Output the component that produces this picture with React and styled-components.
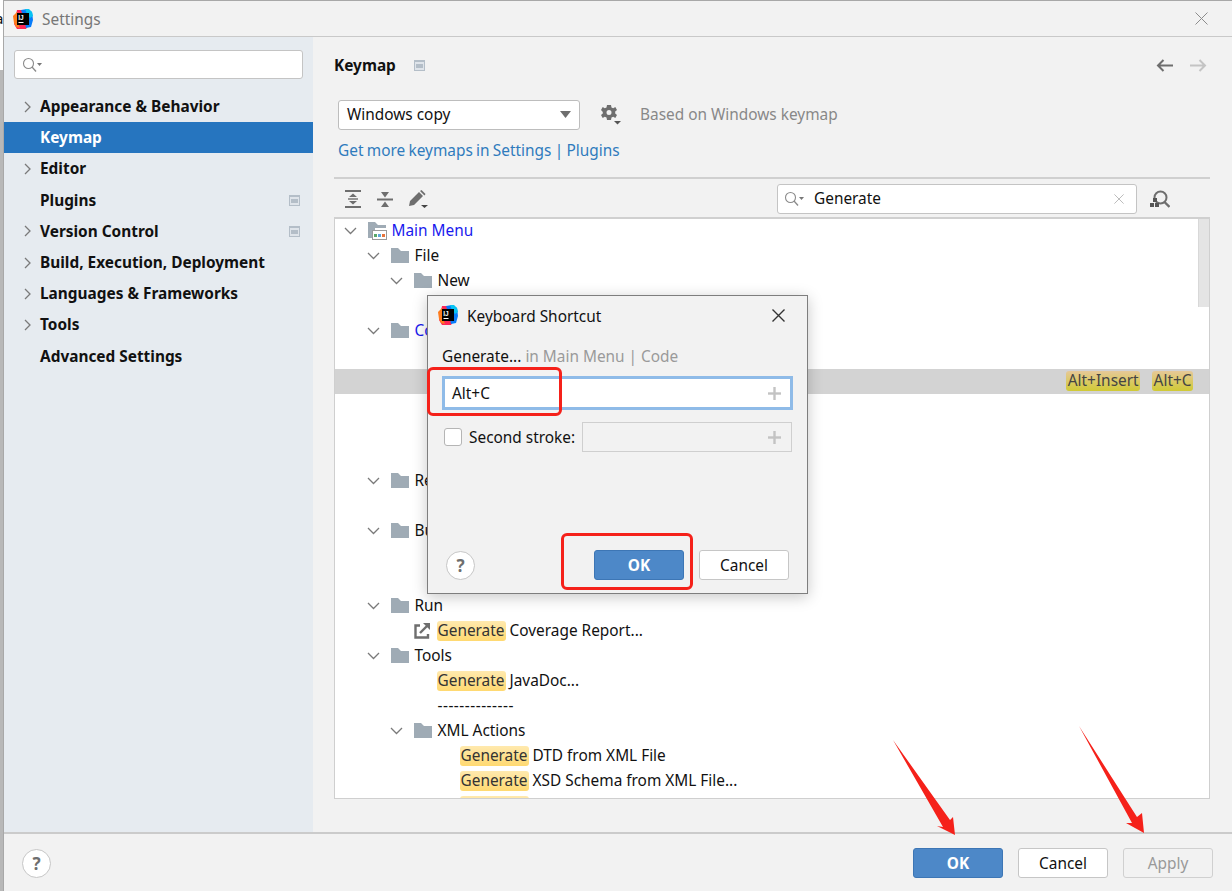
import React from 'react'
import styled, { createGlobalStyle } from 'styled-components'

const GlobalStyle = createGlobalStyle`
  html, body { margin: 0; padding: 0; background: #fff; }
  body { font-family: "Noto Sans", "Open Sans", sans-serif; font-size: 15.4px; color: #111; }
  * { box-sizing: border-box; }
`

const Page = styled.div`
  position: relative;
  width: 1232px;
  height: 891px;
  overflow: hidden;
  padding-left: 3px;
  background: linear-gradient(#fff 70px, #b8b8b8 70px);
`
const EdgeLetter = styled.span`
  position: absolute;
  left: -5px;
  top: 8px;
  font-size: 15px;
`
const Window = styled.div`
  display: flex;
  flex-direction: column;
  height: 891px;
  border-top: 1px solid #a8a8a8;
  border-left: 1px solid #a8a8a8;
  background: #f2f2f2;
`
const TitleBar = styled.div`
  display: flex;
  align-items: center;
  height: 36px;
  flex: none;
  padding: 0 24px 0 9px;
  gap: 9px;
  border-bottom: 1px solid #c9c9c9;
`
const TitleText = styled.span`
  flex: 1;
  margin-top: 2px;
  color: #777;
`
const Body = styled.div`
  display: flex;
  flex: 1;
  min-height: 0;
`
const Sidebar = styled.nav`
  width: 309px;
  flex: none;
  background: #e6ebf0;
  padding-top: 13px;
`
const SideSearch = styled.div`
  display: flex;
  align-items: center;
  height: 29px;
  margin: 0 10px 12px;
  padding-left: 7px;
  background: #fff;
  border: 1px solid #c4c4c4;
  border-radius: 3px;
`
const SideItem = styled.div`
  display: flex;
  align-items: center;
  height: 31.2px;
  padding: 0 13px 0 19px;
  font-weight: 700;
  background: ${p => (p.$active ? '#2675bf' : 'transparent')};
  color: ${p => (p.$active ? '#fff' : '#111')};
`
const SideLabel = styled.span`
  flex: 1;
  margin-left: 5px;
`
const Chevron = styled.span`
  display: inline-flex;
  width: 12px;
  flex: none;
`
const Main = styled.main`
  flex: 1;
  min-width: 0;
  display: flex;
  flex-direction: column;
  padding: 0 22px 0 21px;
`
const Header = styled.div`
  display: flex;
  align-items: center;
  height: 56px;
  flex: none;
  gap: 18px;
`
const HeaderTitle = styled.span`
  font-weight: 700;
`
const NavArrows = styled.div`
  margin-left: auto;
  display: flex;
  gap: 17px;
  margin-right: 3px;
`
const KeymapRow = styled.div`
  display: flex;
  align-items: center;
  height: 30px;
  margin-top: 7px;
  margin-left: 4px;
  flex: none;
`
const Select = styled.div`
  display: flex;
  align-items: center;
  justify-content: space-between;
  width: 242px;
  height: 30px;
  padding: 0 8px 2px 8px;
  background: #fff;
  border: 1px solid #bdbdbd;
  border-radius: 3px;
`
const BasedOn = styled.span`
  margin-left: 19px;
  padding-bottom: 1px;
  color: #888;
`
const GearBox = styled.span`
  display: inline-flex;
  margin-left: 21px;
`
const MoreLink = styled.div`
  margin: 10px 0 0 4px;
  height: 21px;
  line-height: 21px;
  flex: none;
  word-spacing: -0.7px;
  color: #2f7bbd;
`
const Toolbar = styled.div`
  display: flex;
  align-items: center;
  flex: none;
  height: 40px;
  margin-top: 16px;
  padding: 2px 40px 0 11px;
  gap: 16px;
  border-top: 2px solid #d0d0d0;
`
const ToolSearch = styled.div`
  display: flex;
  align-items: center;
  width: 360px;
  height: 30px;
  margin-left: auto;
  margin-right: -3px;
  padding: 0 12px 0 6px;
  background: #fff;
  border: 1px solid #c4c4c4;
  border-radius: 3px;
`
const ToolSearchText = styled.span`
  flex: 1;
  margin-left: 10px;
  padding-bottom: 1px;
`
const Tree = styled.div`
  position: relative;
  height: 582px;
  flex: none;
  overflow: hidden;
  background: #fff;
  border: 1px solid #cfcfcf;
  border-top: 2px solid #d0d0d0;
`
const Row = styled.div`
  display: flex;
  align-items: center;
  height: 25px;
  padding-left: ${p => p.$level * 23 + 9}px;
  padding-right: 16px;
  padding-bottom: 2px;
  background: ${p => (p.$selected ? '#d3d3d3' : 'transparent')};
  white-space: pre;
`
const TwistSlot = styled.span`
  display: inline-flex;
  width: 24px;
  flex: none;
`
const IconSlot = styled.span`
  display: inline-flex;
  justify-content: flex-start;
  width: 23.5px;
  flex: none;
`
const RowLabel = styled.span`
  color: ${p => (p.$link ? '#1a1aee' : '#111')};
  letter-spacing: ${p => (p.$dashes ? '0.5px' : 'normal')};
`
const Highlight = styled.span`
  display: inline-block;
  height: 20px;
  line-height: 19px;
  margin-left: -1px;
  padding: 0 1px;
  border-radius: 3px;
  background: linear-gradient(#ffe9ae, #ffd971);
  color: #333;
`
const Shortcuts = styled.div`
  margin-left: auto;
  display: flex;
  gap: 12px;
`
const KeyChip = styled.span`
  height: 20px;
  line-height: 19px;
  padding: 0 1.5px;
  border-radius: 3px;
  background: linear-gradient(#e6c898, #d0ca35);
  color: #444;
`
const ScrollThumb = styled.div`
  position: absolute;
  right: 0;
  top: 0;
  width: 11px;
  height: 88px;
  background: #e4e4e4;
  border-left: 1px solid #d8d8d8;
`
const Footer = styled.div`
  display: flex;
  align-items: center;
  flex: none;
  height: 59px;
  padding: 1px 19px 0 18px;
  gap: 15px;
  border-top: 2px solid #cbcbcb;
`
const HelpButton = styled.span`
  display: inline-flex;
  align-items: center;
  justify-content: center;
  width: 29px;
  height: 29px;
  flex: none;
  border-radius: 50%;
  background: #fff;
  border: 1px solid #c6c6c6;
  font-weight: 700;
  font-size: 17px;
  color: #6e6e6e;
`
const Spacer = styled.div`
  flex: 1;
`
const Button = styled.button`
  width: 90px;
  height: 30px;
  padding: 0;
  border-radius: 3px;
  font: inherit;
  font-weight: ${p => (p.$primary ? 700 : 400)};
  border: 1px solid ${p => (p.$primary ? '#3d76b5' : p.$disabled ? '#d0d0d0' : '#c6c6c6')};
  background: ${p => (p.$primary ? '#4d88c8' : p.$disabled ? '#f2f2f2' : '#fff')};
  color: ${p => (p.$primary ? '#fff' : p.$disabled ? '#999' : '#111')};
`
const Dialog = styled.div`
  position: absolute;
  left: 427px;
  top: 295px;
  width: 381px;
  height: 299px;
  display: flex;
  flex-direction: column;
  background: #f2f2f2;
  border: 1px solid #7e7e7e;
  box-shadow: 0 3px 14px rgba(0, 0, 0, 0.22);
  padding: 0 15px 0 14px;
`
const DialogTitle = styled.div`
  display: flex;
  align-items: center;
  height: 38px;
  margin-left: -4px;
  margin-right: 7px;
  gap: 9px;
  flex: none;
`
const DialogName = styled.span`
  flex: 1;
  margin-top: 2px;
`
const ActionPath = styled.div`
  margin-top: 12px;
  height: 21px;
  line-height: 21px;
  flex: none;
`
const Muted = styled.span`
  color: #9a9a9a;
`
const FocusField = styled.div`
  display: flex;
  align-items: center;
  justify-content: space-between;
  height: 34px;
  margin: 9px -1px 0 0;
  padding: 0 9px 0 7px;
  background: #fff;
  border: 3px solid #8fbbe8;
`
const StrokeRow = styled.div`
  display: flex;
  align-items: center;
  height: 30px;
  margin-top: 12px;
  flex: none;
`
const Checkbox = styled.span`
  width: 18px;
  height: 18px;
  margin: 0 7px 0 2px;
  flex: none;
  background: #fff;
  border: 1px solid #b5b5b5;
  border-radius: 3px;
`
const DisabledField = styled.div`
  display: flex;
  align-items: center;
  justify-content: flex-end;
  flex: 1;
  height: 30px;
  margin-left: 7px;
  padding-right: 10px;
  border: 1px solid #cfcfcf;
  background: #f2f2f2;
`
const DialogActions = styled.div`
  display: flex;
  align-items: center;
  margin-top: auto;
  margin-bottom: 13px;
  padding: 0 3px 0 4px;
  gap: 15px;
`
const Mark = styled.div`
  position: absolute;
  left: ${p => p.$x}px;
  top: ${p => p.$y}px;
  width: ${p => p.$w}px;
  height: ${p => p.$h}px;
  border: 3.500px solid #f5211a;
  border-radius: 6px;
  pointer-events: none;
`
const ArrowSvg = styled.svg`
  position: absolute;
  left: 880px;
  top: 720px;
  pointer-events: none;
`

const ChevronRight = () => (
  <svg width="9" height="12" viewBox="0 0 9 12" fill="none" stroke="#7a7a7a" strokeWidth="1.3"><path d="M2 1l5 5-5 5" /></svg>
)
const ChevronDown = () => (
  <svg width="13" height="8" viewBox="0 0 13 8" fill="none" stroke="#7a7a7a" strokeWidth="1.3"><path d="M1 1l5.500 5.500L12 1" /></svg>
)
const Folder = () => (
  <svg width="18" height="15" viewBox="0 0 18 15"><path d="M0 0h7l3 3h8v12H0z" fill="#9fabb5" /></svg>
)
const MenuFolder = () => (
  <svg width="19" height="18" viewBox="0 0 19 18">
    <path d="M0 0h7l3 3h8v3H7v10H0z" fill="#9fabb5" />
    <rect x="4.500" y="8.500" width="14" height="9" fill="#fff" stroke="#9a9a9a" />
    <rect x="6" y="12" width="3" height="3" fill="#59a869" />
    <rect x="10" y="12" width="3" height="3" fill="#5fa7d9" />
    <rect x="14" y="12" width="3" height="3" fill="#e8743b" />
  </svg>
)
const SearchIcon = () => (
  <svg width="20" height="16" viewBox="0 0 20 16" fill="none">
    <circle cx="6.500" cy="6.500" r="5" stroke="#8a8a8a" strokeWidth="1.100" />
    <path d="M10 10l4 4.500" stroke="#8a8a8a" strokeWidth="1.300" />
    <path d="M15 6h5l-2.500 3z" fill="#777" />
  </svg>
)
const PinIcon = () => (
  <svg width="11" height="11" viewBox="0 0 11 11">
    <rect width="11" height="11" fill="#b4bec8" />
    <rect x="1" y="2" width="9" height="8" fill="#dfe4ea" />
    <rect x="2" y="4" width="7" height="4" fill="#b4bec8" />
  </svg>
)
const IdeaLogo = () => (
  <svg width="20" height="20" viewBox="0 0 20 20">
    <path d="M4 1h10l2 14-3 5H4L1 15z" fill="#fe2857" />
    <path d="M0 7l4-4 3 3-2 8 2 5-4-1-2-4z" fill="#fe7c1e" />
    <path d="M8 1l6-1 5 3 1 8-2 7-5 1-2-9z" fill="#087cfa" />
    <path d="M12 0h4l3 3 1 4-3 2-3-4z" fill="#07c3f2" />
    <rect x="4" y="4" width="12" height="12" fill="#000" />
    <rect x="5.500" y="13" width="5" height="1" fill="#fff" />
    <text x="5.300" y="11" fontFamily="Liberation Sans, sans-serif" fontWeight="700" fontSize="6.500" fill="#fff">IJ</text>
  </svg>
)
const CloseIcon = ({ color = '#8c8c8c', w = 1, size = 13 }) => (
  <svg width={size} height={size} viewBox="0 0 13 13" fill="none" stroke={color} strokeWidth={w}><path d="M.5.5l12 12M12.500.5l-12 12" /></svg>
)
const ArrowIcon = ({ dir, color }) => (
  <svg width="17" height="13" viewBox="0 0 17 13" fill="none" stroke={color} strokeWidth="2">
    {dir === 'left' ? <path d="M17 6.500H2M7.500 1L2 6.500 7.500 12" /> : <path d="M0 6.500h15M9.500 1L15 6.500 9.500 12" />}
  </svg>
)
const Gear = () => (
  <svg width="20" height="20" viewBox="0 0 20 20">
    <path fillRule="evenodd" fill="#6e6e6e" d="M6 0h4l.5 2.400 1.700.8 2.100-1.300 1.700 3-1.800 1.600v1.900l1.800 1.600-1.700 3-2.100-1.300-1.700.8L10 15H6l-.5-2.500-1.700-.8-2.100 1.300-1.700-3 1.800-1.600V7L0 5l1.700-3 2.100 1.200 1.700-.8zM8 5a2.500 2.500 0 100 5 2.500 2.500 0 000-5z" />
    <path d="M13 16h7l-3.500 3.500z" fill="#555" />
  </svg>
)
const ExpandIcon = () => (
  <svg width="16" height="18" viewBox="0 0 16 18" fill="#6e6e6e">
    <rect width="16" height="2" /><rect y="16" width="16" height="2" />
    <path d="M8 3.500l4 3.500H4zM8 14.500L4 11h8z" /><rect x="3" y="8.300" width="10" height="1.400" />
  </svg>
)
const CollapseIcon = () => (
  <svg width="16" height="17" viewBox="0 0 16 17" fill="#6e6e6e">
    <rect y="7.500" width="16" height="2" />
    <path d="M8 6.500L4 1h8zM8 10.500l4 5.500H4z" />
  </svg>
)
const PencilIcon = () => (
  <svg width="19" height="18" viewBox="0 0 19 18" fill="#6e6e6e">
    <path d="M0 16l1-5L10 2l4 4-9 9zM11 1l1.500-1 4 4-1 1.500z" />
    <path d="M12 15h7l-3.500 3z" fill="#444" />
  </svg>
)
const FindIcon = () => (
  <svg width="20" height="18" viewBox="0 0 20 18" fill="none">
    <circle cx="10.500" cy="7.500" r="6" stroke="#6e6e6e" strokeWidth="2" />
    <path d="M14.500 12l5 5" stroke="#6e6e6e" strokeWidth="2.400" />
    <rect x="0" y="13" width="4" height="4" fill="#555" /><rect x="5" y="13" width="4" height="4" fill="#555" /><rect x="3" y="8" width="4" height="4" fill="#555" />
  </svg>
)
const ExportIcon = () => (
  <svg width="16" height="16" viewBox="0 0 16 16" fill="none" stroke="#6e6e6e" strokeWidth="2.400">
    <path d="M6 2.500H1.500v12H14V11" /><path d="M6 10l8-8" /><path fill="#6e6e6e" stroke="none" d="M9 0h7v7z" />
  </svg>
)
const Plus = () => (
  <svg width="13" height="13" viewBox="0 0 13 13" fill="#c3c3c3"><rect x="5.300" width="2.400" height="13" /><rect y="5.300" width="13" height="2.400" /></svg>
)
const Caret = () => (
  <svg width="11" height="7" viewBox="0 0 11 7"><path d="M0 0h11L5.500 7z" fill="#6e6e6e" /></svg>
)

const sideItems = [
  { label: 'Appearance & Behavior', arrow: true },
  { label: 'Keymap', active: true },
  { label: 'Editor', arrow: true },
  { label: 'Plugins', pin: true },
  { label: 'Version Control', arrow: true, pin: true },
  { label: 'Build, Execution, Deployment', arrow: true },
  { label: 'Languages & Frameworks', arrow: true },
  { label: 'Tools', arrow: true },
  { label: 'Advanced Settings' },
]

const treeRows = [
  { level: 0, folder: 'menu', label: 'Main Menu', link: true },
  { level: 1, folder: 'plain', label: 'File' },
  { level: 2, folder: 'plain', label: 'New' },
  { level: 3 },
  { level: 1, folder: 'plain', label: 'Code', link: true },
  { level: 3 },
  { level: 3, selected: true, keys: ['Alt+Insert', 'Alt+C'] },
  { level: 3 },
  { level: 3 },
  { level: 3 },
  { level: 1, folder: 'plain', label: 'Refactor' },
  { level: 3 },
  { level: 1, folder: 'plain', label: 'Build' },
  { level: 3 },
  { level: 3 },
  { level: 1, folder: 'plain', label: 'Run' },
  { level: 2, icon: true, gen: true, label: ' Coverage Report...' },
  { level: 1, folder: 'plain', label: 'Tools' },
  { level: 2, blank: true, gen: true, label: ' JavaDoc...' },
  { level: 2, blank: true, dashes: true, label: '--------------' },
  { level: 2, folder: 'plain', label: 'XML Actions' },
  { level: 3, blank: true, gen: true, label: ' DTD from XML File' },
  { level: 3, blank: true, gen: true, label: ' XSD Schema from XML File...' },
  { level: 3, blank: true, gen: true, label: '' },
]

function TreeRow({ row }) {
  return (
    <Row $level={row.level} $selected={row.selected}>
      <TwistSlot>{row.folder && <ChevronDown />}</TwistSlot>
      {row.folder && <IconSlot>{row.folder === 'menu' ? <MenuFolder /> : <Folder />}</IconSlot>}
      {row.icon && <IconSlot><ExportIcon /></IconSlot>}
      {row.blank && <IconSlot />}
      {row.gen && <Highlight>Generate</Highlight>}
      {row.label && <RowLabel $link={row.link} $dashes={row.dashes}>{row.label}</RowLabel>}
      {row.keys && (
        <Shortcuts>
          {row.keys.map(k => <KeyChip key={k}>{k}</KeyChip>)}
        </Shortcuts>
      )}
    </Row>
  )
}

export default function App() {
  return (
    <Page>
      <GlobalStyle />
      <EdgeLetter>a</EdgeLetter>
      <Window>
        <TitleBar>
          <IdeaLogo />
          <TitleText>Settings</TitleText>
          <CloseIcon />
        </TitleBar>
        <Body>
          <Sidebar>
            <SideSearch><SearchIcon /></SideSearch>
            {sideItems.map(item => (
              <SideItem key={item.label} $active={item.active}>
                <Chevron>{item.arrow && <ChevronRight />}</Chevron>
                <SideLabel>{item.label}</SideLabel>
                {item.pin && <PinIcon />}
              </SideItem>
            ))}
          </Sidebar>
          <Main>
            <Header>
              <HeaderTitle>Keymap</HeaderTitle>
              <PinIcon />
              <NavArrows>
                <ArrowIcon dir="left" color="#6e6e6e" />
                <ArrowIcon dir="right" color="#c4c4c4" />
              </NavArrows>
            </Header>
            <KeymapRow>
              <Select>Windows copy <Caret /></Select>
              <GearBox><Gear /></GearBox>
              <BasedOn>Based on Windows keymap</BasedOn>
            </KeymapRow>
            <MoreLink>Get more keymaps in Settings | Plugins</MoreLink>
            <Toolbar>
              <ExpandIcon />
              <CollapseIcon />
              <PencilIcon />
              <ToolSearch>
                <SearchIcon />
                <ToolSearchText>Generate</ToolSearchText>
                <CloseIcon color="#bdbdbd" size={10} w={1.3} />
              </ToolSearch>
              <FindIcon />
            </Toolbar>
            <Tree>
              <ScrollThumb />
              {treeRows.map((row, i) => <TreeRow key={i} row={row} />)}
            </Tree>
          </Main>
        </Body>
        <Footer>
          <HelpButton>?</HelpButton>
          <Spacer />
          <Button $primary>OK</Button>
          <Button>Cancel</Button>
          <Button $disabled>Apply</Button>
        </Footer>
      </Window>

      <Dialog>
        <DialogTitle>
          <IdeaLogo />
          <DialogName>Keyboard Shortcut</DialogName>
          <CloseIcon color="#333" w={1.4} />
        </DialogTitle>
        <ActionPath>Generate... <Muted>in Main Menu | Code</Muted></ActionPath>
        <FocusField>Alt+C <Plus /></FocusField>
        <StrokeRow>
          <Checkbox />
          Second stroke:
          <DisabledField><Plus /></DisabledField>
        </StrokeRow>
        <DialogActions>
          <HelpButton>?</HelpButton>
          <Spacer />
          <Button $primary>OK</Button>
          <Button>Cancel</Button>
        </DialogActions>
      </Dialog>

      <Mark $x={427} $y={367} $w={135} $h={49} />
      <Mark $x={561} $y={533} $w={132} $h={57} />
      <ArrowSvg width="300" height="120" viewBox="0 0 300 120">
        <path d="M13 20L70 100l3-3 2 18-18-9 6 1z" fill="#f5211a" />
        <path d="M199 6l58 91 5-4 2 20-18-10 6 0z" fill="#f5211a" />
      </ArrowSvg>
    </Page>
  )
}
